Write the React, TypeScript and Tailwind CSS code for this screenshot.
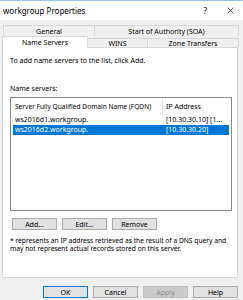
import React from 'react';

function Btn({ label, primary, disabled, className }: { label: string; primary?: boolean; disabled?: boolean; className?: string }) {
  return (
    <div
      className={`h-[12px] w-[45px] flex items-center justify-center border text-[7px] leading-none ${
        disabled
          ? 'bg-[#cccccc] border-[#bfbfbf] text-[#8f8f8f]'
          : primary
          ? 'bg-[#e1e1e1] border-[#0078d7] text-black'
          : 'bg-[#e1e1e1] border-[#adadad] text-black'
      } ${className ?? ''}`}
    >
      {label}
    </div>
  );
}

export default function App() {
  return (
    <div
      className="w-[243px] h-[300px] bg-[#f0f0f0] flex flex-col overflow-hidden text-black"
      style={{ fontFamily: '"Segoe UI", "Noto Sans", sans-serif' }}
    >
      {/* title bar */}
      <div className="h-[20px] bg-white border-t border-[#9cc4ea] flex items-center pl-[3px] pr-[9px] shrink-0">
        <span className="text-[8px] leading-none">workgroup Properties</span>
        <span className="ml-auto text-[8px] leading-none mr-[20px]">?</span>
        <svg width="7" height="7" viewBox="0 0 7 7" className="mb-[1px]">
          <path d="M0.5 0.5 L6.5 6.5 M6.5 0.5 L0.5 6.5" stroke="#333" strokeWidth="0.8" />
        </svg>
      </div>

      {/* tabs */}
      <div className="mt-[5px] px-[2px] shrink-0">
        <div className="flex h-[11px] pl-[1px] pr-[2px]">
          <div className="w-[92px] border border-b-0 border-[#d9d9d9] bg-[#f0f0f0] text-[7px] leading-none flex items-center justify-center">
            General
          </div>
          <div className="flex-1 border border-l-0 border-b-0 border-[#d9d9d9] bg-[#f0f0f0] text-[7px] leading-none flex items-center justify-center">
            Start of Authority (SOA)
          </div>
        </div>
        <div className="flex h-[11px] pr-[2px]">
          <div className="w-[86px] border border-b-0 border-[#d9d9d9] bg-white text-[7px] leading-none flex items-center justify-center relative z-10 h-[12px] -mb-[1px]">
            Name Servers
          </div>
          <div className="mt-[2px] w-[60px] border border-l-0 border-b-0 border-[#d9d9d9] bg-[#f0f0f0] text-[7px] leading-none flex items-center justify-center">
            WINS
          </div>
          <div className="mt-[2px] flex-1 border border-l-0 border-b-0 border-[#d9d9d9] bg-[#f0f0f0] text-[7px] leading-none flex items-center justify-center">
            Zone Transfers
          </div>
        </div>
      </div>

      {/* panel */}
      <div className="mx-[2px] mr-[5px] h-[231px] bg-white border border-[#d9d9d9] px-[7px] flex flex-col shrink-0 text-[7px] leading-[8px]">
        <div className="mt-[9px]">To add name servers to the list, click Add.</div>
        <div className="mt-[20px]">Name servers:</div>
        <div className="mt-[4px] h-[114px] w-[222px] border border-[#828790] flex flex-col">
          <div className="flex h-[17px] items-center">
            <div className="w-[152px] pl-[4px] border-r border-[#e5e5e5] h-full flex items-center text-[6.6px]">
              Server Fully Qualified Domain Name (FQDN)
            </div>
            <div className="pl-[3px]">IP Address</div>
          </div>
          <div className="flex h-[10px] items-center mx-[2px]">
            <div className="w-[150px] pl-[2px]">ws2016d1.workgroup.</div>
            <div className="pl-[3px]">[10.30.30.10] [1...</div>
          </div>
          <div className="flex h-[10px] items-center mx-[2px] bg-[#0078d7] text-white">
            <div className="w-[150px] pl-[2px]">ws2016d2.workgroup.</div>
            <div className="pl-[3px]">[10.30.30.20]</div>
          </div>
        </div>
        <div className="flex gap-[5px] mt-[7px] ml-[2px]">
          <Btn label="Add..." />
          <Btn label="Edit..." />
          <Btn label="Remove" />
        </div>
        <div className="mt-[7px] leading-[8px] text-[6.7px]">
          * represents an IP address retrieved as the result of a DNS query and
          <br />
          may not represent actual records stored on this server.
        </div>
      </div>

      {/* bottom buttons */}
      <div className="flex gap-[5px] justify-end pr-[5px] mt-[8px]">
        <Btn label="OK" primary className="w-[44px]" />
        <Btn label="Cancel" />
        <Btn label="Apply" disabled />
        <Btn label="Help" />
      </div>
    </div>
  );
}
